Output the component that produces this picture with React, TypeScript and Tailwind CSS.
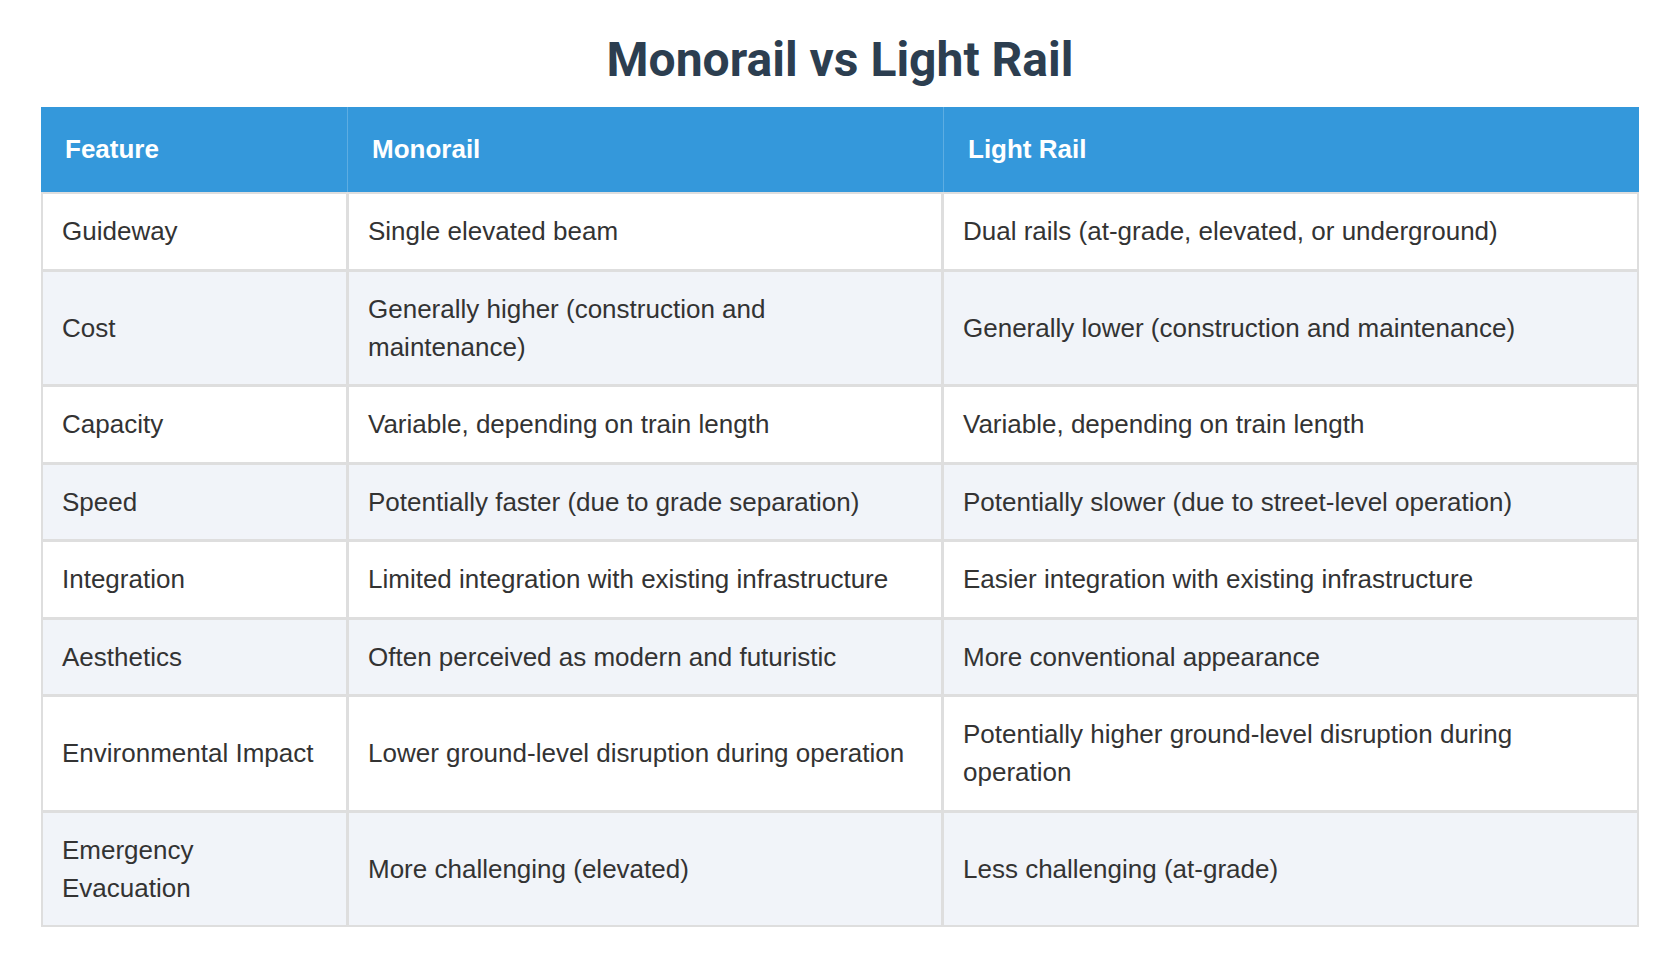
import React from "react";

const rows: [string, string, string][] = [
  ["Guideway", "Single elevated beam", "Dual rails (at-grade, elevated, or underground)"],
  ["Cost", "Generally higher (construction and maintenance)", "Generally lower (construction and maintenance)"],
  ["Capacity", "Variable, depending on train length", "Variable, depending on train length"],
  ["Speed", "Potentially faster (due to grade separation)", "Potentially slower (due to street-level operation)"],
  ["Integration", "Limited integration with existing infrastructure", "Easier integration with existing infrastructure"],
  ["Aesthetics", "Often perceived as modern and futuristic", "More conventional appearance"],
  ["Environmental Impact", "Lower ground-level disruption during operation", "Potentially higher ground-level disruption during operation"],
  ["Emergency Evacuation", "More challenging (elevated)", "Less challenging (at-grade)"],
];

export default function App() {
  return (
    <div className="min-h-[970px] bg-white px-[41px] font-['Liberation_Sans',Arial,sans-serif]">
      <h1 className="pt-[32px] pb-[19px] text-center font-['Roboto',sans-serif] text-[48px] font-bold leading-[56px] text-[#2c3e50]">
        Monorail vs Light Rail
      </h1>
      <div className="grid grid-cols-[307px_596px_1fr] bg-[#3498db] text-[26px] font-bold leading-[38.4px] text-white">
        <div className="border-r border-[#5dade2] px-[24px] py-[23.3px]">Feature</div>
        <div className="border-r border-[#5dade2] px-[24px] py-[23.3px]">Monorail</div>
        <div className="px-[24px] py-[23.3px]">Light Rail</div>
      </div>
      <div className="grid grid-cols-[303px_592px_1fr] gap-[3px] bg-[#dedede] p-[2px] text-[26px] leading-[37.8px] text-[#333333]">
        {rows.map((r, i) => {
          const bg = i % 2 === 0 ? "bg-white" : "bg-[#f1f4f9]";
          return (
            <React.Fragment key={r[0]}>
              {r.map((c, j) => (
                <div key={j} className={`${bg} flex items-center px-[19px] pt-[19.2px] pb-[17.6px]`}>
                  <span>{c}</span>
                </div>
              ))}
            </React.Fragment>
          );
        })}
      </div>
    </div>
  );
}
